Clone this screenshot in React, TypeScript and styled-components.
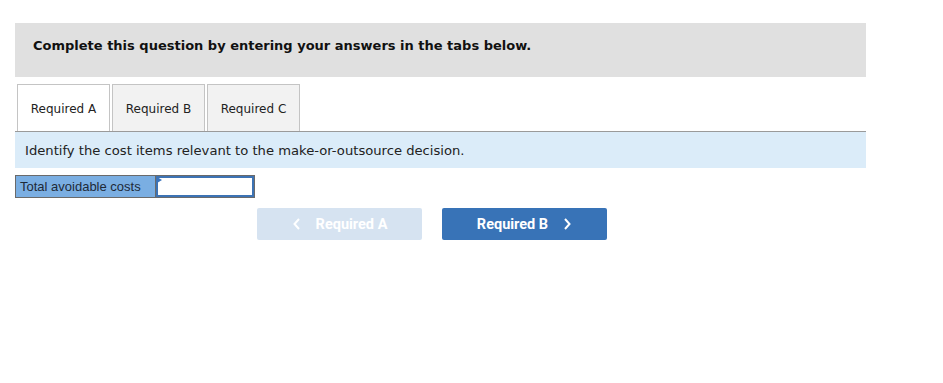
import { FunctionComponent, useState } from 'react';
import styled, { createGlobalStyle } from 'styled-components';

const GlobalStyle = createGlobalStyle`
	body {
		margin: 0;
		background: #ffffff;
		font-family: 'DejaVu Sans', Verdana, sans-serif;
	}
`;

const TABS = ['Required A', 'Required B', 'Required C'];

/** Question panel with tabs and the answer row */
const App: FunctionComponent = () => {
	const [active, setActive] = useState(0);
	const [value, setValue] = useState('');

	return (
		<>
			<GlobalStyle />
			<Page>
				<Banner>Complete this question by entering your answers in the tabs below.</Banner>
				<TabBar>
					{TABS.map((tab, i) => (
						<Tab key={tab} $active={i === active} onClick={() => setActive(i)}>
							{tab}
						</Tab>
					))}
				</TabBar>
				<Instruction>Identify the cost items relevant to the make-or-outsource decision.</Instruction>
				<AnswerRow>
					<Label>Total avoidable costs</Label>
					<InputCell>
						<Input value={value} onChange={(e) => setValue(e.target.value)} />
						<Marker />
					</InputCell>
				</AnswerRow>
				<NavRow>
					<NavButton $disabled>
						<Chevron viewBox="0 0 10 16">
							<path d="M7 3 L2.5 8 L7 13" />
						</Chevron>
						Required A
					</NavButton>
					<NavButton>
						Required B
						<Chevron viewBox="0 0 10 16">
							<path d="M3 3 L7.5 8 L3 13" />
						</Chevron>
					</NavButton>
				</NavRow>
			</Page>
		</>
	);
};

const Page = styled.div`
	width: 851px;
	padding: 23px 0 0 15px;
`;

const Banner = styled.div`
	background: #e0e0e0;
	height: 54px;
	box-sizing: border-box;
	padding: 15px 0 0 18px;
	font-size: 13px;
	font-weight: bold;
	color: #111;
`;

const TabBar = styled.div`
	display: flex;
	gap: 2px;
	margin-top: 7px;
	padding-left: 2px;
	border-bottom: 1px solid #9a9a9a;
`;

const Tab = styled.button<{ $active?: boolean }>`
	width: 93px;
	height: 47px;
	box-sizing: border-box;
	border: 1px solid #c4c4c4;
	border-bottom: none;
	background: ${({ $active }) => ($active ? '#ffffff' : '#f2f2f2')};
	font-family: 'DejaVu Sans', Verdana, sans-serif;
	font-size: 12px;
	color: #222;
	padding: 2px 0 0;
	cursor: pointer;
`;

const Instruction = styled.div`
	background: #dbecf9;
	height: 36px;
	box-sizing: border-box;
	padding: 11px 0 0 10px;
	font-size: 13.15px;
	color: #222;
`;

const AnswerRow = styled.div`
	display: flex;
	margin-top: 7px;
	height: 23px;
	width: 240px;
`;

const Label = styled.div`
	width: 140px;
	box-sizing: border-box;
	background: #7aaee2;
	border: 1px solid #6a6a6a;
	border-right: none;
	padding: 3px 0 0 4px;
	font-family: 'Liberation Sans', Arial, sans-serif;
	font-size: 13px;
	color: #1e2a38;
`;

const InputCell = styled.div`
	position: relative;
	width: 100px;
	border: 1px solid #6a6a6a;
	box-sizing: border-box;
`;

const Marker = styled.span`
	position: absolute;
	top: 1px;
	left: 1px;
	width: 0;
	height: 0;
	border-top: 3px solid transparent;
	border-bottom: 3px solid transparent;
	border-left: 5px solid #3a74bd;
`;

const Input = styled.input`
	display: block;
	width: 100%;
	height: 100%;
	box-sizing: border-box;
	border: 2px solid #3d73b4;
	outline: none;
	padding: 0 4px;
	font-family: 'Liberation Sans', Arial, sans-serif;
	font-size: 12px;
`;

const NavRow = styled.div`
	display: flex;
	gap: 20px;
	margin-top: 10px;
	padding-left: 242px;
`;

const NavButton = styled.button<{ $disabled?: boolean }>`
	display: flex;
	align-items: center;
	justify-content: center;
	gap: 14px;
	width: 165px;
	height: 32px;
	border: none;
	border-radius: 2px;
	background: ${({ $disabled }) => ($disabled ? '#d6e3f1' : '#3873b7')};
	color: #ffffff;
	font-family: Roboto, 'Liberation Sans', Arial, sans-serif;
	font-weight: bold;
	font-size: 14.5px;
	cursor: ${({ $disabled }) => ($disabled ? 'default' : 'pointer')};
`;

const Chevron = styled.svg`
	width: 10px;
	height: 16px;
	fill: none;
	stroke: #ffffff;
	stroke-width: 2;
`;

export default App;
